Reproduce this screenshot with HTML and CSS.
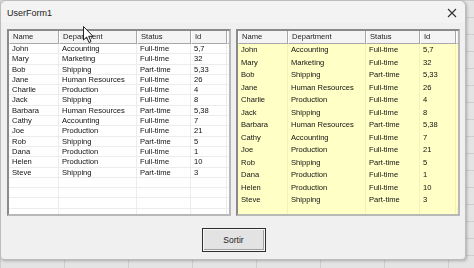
FILE: index.html
```html
<!DOCTYPE html>
<html lang="en">

<head>
	<meta charset="UTF-8">
	<meta name="viewport" content="width=device-width, initial-scale=1.0">
	<title>UserForm1</title>
	<link rel="stylesheet" href="styles.css">
</head>

<body>
	<div class="window">
		<div class="titlebar">
			<span class="title">UserForm1</span>
			<svg class="close" width="10" height="10" viewBox="0 0 10 10">
				<path d="M1 1 L9 9 M9 1 L1 9" stroke="#333" stroke-width="1.1" fill="none" />
			</svg>
		</div>
		<div class="client">
			<div class="lists">
				<div class="listbox plain">
					<div class="list-head"><span>Name</span><span>Department</span><span>Status</span><span>Id</span><span></span></div>
					<div class="list-row"><span>John</span><span>Accounting</span><span>Full-time</span><span>5,7</span><span></span></div>
					<div class="list-row"><span>Mary</span><span>Marketing</span><span>Full-time</span><span>32</span><span></span></div>
					<div class="list-row"><span>Bob</span><span>Shipping</span><span>Part-time</span><span>5,33</span><span></span></div>
					<div class="list-row"><span>Jane</span><span>Human Resources</span><span>Full-time</span><span>26</span><span></span></div>
					<div class="list-row"><span>Charlie</span><span>Production</span><span>Full-time</span><span>4</span><span></span></div>
					<div class="list-row"><span>Jack</span><span>Shipping</span><span>Full-time</span><span>8</span><span></span></div>
					<div class="list-row"><span>Barbara</span><span>Human Resources</span><span>Part-time</span><span>5,38</span><span></span></div>
					<div class="list-row"><span>Cathy</span><span>Accounting</span><span>Full-time</span><span>7</span><span></span></div>
					<div class="list-row"><span>Joe</span><span>Production</span><span>Full-time</span><span>21</span><span></span></div>
					<div class="list-row"><span>Rob</span><span>Shipping</span><span>Part-time</span><span>5</span><span></span></div>
					<div class="list-row"><span>Dana</span><span>Production</span><span>Full-time</span><span>1</span><span></span></div>
					<div class="list-row"><span>Helen</span><span>Production</span><span>Full-time</span><span>10</span><span></span></div>
					<div class="list-row"><span>Steve</span><span>Shipping</span><span>Part-time</span><span>3</span><span></span></div>
					<div class="list-row"><span></span><span></span><span></span><span></span><span></span></div>
					<div class="list-row"><span></span><span></span><span></span><span></span><span></span></div>
					<div class="list-row"><span></span><span></span><span></span><span></span><span></span></div>
					<div class="list-row"><span></span><span></span><span></span><span></span><span></span></div>
					<div class="list-fill"><span></span><span></span><span></span><span></span><span></span></div>
				</div>
				<div class="listbox yellow">
					<div class="list-head"><span>Name</span><span>Department</span><span>Status</span><span>Id</span><span></span></div>
					<div class="list-row"><span>John</span><span>Accounting</span><span>Full-time</span><span>5,7</span><span></span></div>
					<div class="list-row"><span>Mary</span><span>Marketing</span><span>Full-time</span><span>32</span><span></span></div>
					<div class="list-row"><span>Bob</span><span>Shipping</span><span>Part-time</span><span>5,33</span><span></span></div>
					<div class="list-row"><span>Jane</span><span>Human Resources</span><span>Full-time</span><span>26</span><span></span></div>
					<div class="list-row"><span>Charlie</span><span>Production</span><span>Full-time</span><span>4</span><span></span></div>
					<div class="list-row"><span>Jack</span><span>Shipping</span><span>Full-time</span><span>8</span><span></span></div>
					<div class="list-row"><span>Barbara</span><span>Human Resources</span><span>Part-time</span><span>5,38</span><span></span></div>
					<div class="list-row"><span>Cathy</span><span>Accounting</span><span>Full-time</span><span>7</span><span></span></div>
					<div class="list-row"><span>Joe</span><span>Production</span><span>Full-time</span><span>21</span><span></span></div>
					<div class="list-row"><span>Rob</span><span>Shipping</span><span>Part-time</span><span>5</span><span></span></div>
					<div class="list-row"><span>Dana</span><span>Production</span><span>Full-time</span><span>1</span><span></span></div>
					<div class="list-row"><span>Helen</span><span>Production</span><span>Full-time</span><span>10</span><span></span></div>
					<div class="list-row"><span>Steve</span><span>Shipping</span><span>Part-time</span><span>3</span><span></span></div>
					<div class="list-fill"><span></span><span></span><span></span><span></span><span></span></div>
				</div>
			</div>
			<div class="actions">
				<button class="standard-button">Sortir</button>
			</div>
		</div>
	</div>

	<!-- mouse pointer over the form -->
	<svg class="cursor" width="12" height="18" viewBox="0 0 12 18">
		<path d="M0.5 0.5 L0.5 14 L3.6 11 L6 16.5 L8 15.6 L5.7 10.3 L10 10.3 Z" fill="#fff" stroke="#222" stroke-width="1" />
	</svg>
</body>

</html>
```

FILE: styles.css
```css
* {
	margin: 0;
	padding: 0;
	box-sizing: border-box;
}

body {
	width: 474px;
	height: 268px;
	overflow: hidden;
	position: relative;
	background-color: #e4e4e4;
	background-image:
		linear-gradient(#cfcfcf 1px, transparent 1px),
		linear-gradient(90deg, #cfcfcf 1px, transparent 1px);
	background-size: 64px 17px;
	font-family: "Liberation Sans", Arial, sans-serif;
}

.window {
	width: 466px;
	height: 260px;
	background: #f0f0f0;
	border: 1px solid #bcbcbc;
	border-radius: 6px 6px 4px 4px;
	display: flex;
	flex-direction: column;
	box-shadow: 1px 1px 3px rgba(0, 0, 0, 0.25);
}

.titlebar {
	height: 22px;
	display: flex;
	align-items: center;
	justify-content: space-between;
	padding: 2px 6px 0 6px;
	background: #f3f3f3;
	border-radius: 6px 6px 0 0;
}

.title {
	font-size: 9px;
	color: #222;
}

.close {
	margin-right: 2px;
}

.client {
	padding: 6px 5px 0 6px;
}

.lists {
	display: flex;
	gap: 5px;
}

.listbox {
	width: 224px;
	height: 187px;
	border: 2px solid;
	border-color: #8a8a8a #b8b8b8 #b8b8b8 #8a8a8a;
	display: flex;
	flex-direction: column;
	overflow: hidden;
	font-size: 7.6px;
	color: #111;
}

.plain {
	background: white;
}

.yellow {
	background: #ffffc6;
}

.list-head,
.list-row,
.list-fill {
	display: grid;
	grid-template-columns: 50px 78px 54px 36px 1fr;
}

.list-head {
	height: 13px;
	background: #f4f4f4;
	flex-shrink: 0;
}

.list-head span {
	border-right: 1px solid #a8a8a8;
	border-bottom: 1px solid #a8a8a8;
	border-left: 1px solid #ffffff;
	padding-left: 3px;
	line-height: 12px;
	color: #222;
}

.list-row {
	flex-shrink: 0;
}

/* grey text, no colour fringes on the small font */
.list-head span,
.list-row span {
	filter: grayscale(1);
}

.list-row span {
	padding-left: 3px;
	white-space: nowrap;
	overflow: hidden;
}

.plain .list-row {
	height: 10.3px;
}

.plain .list-row span {
	line-height: 9.3px;
	border-right: 1px solid #ececec;
	border-bottom: 1px solid #ececec;
}

.yellow .list-row {
	height: 12.5px;
}

.yellow .list-row span {
	line-height: 12.5px;
	border-right: 1px solid rgba(0, 0, 0, 0.05);
}

.list-fill {
	flex: 1;
}

.plain .list-fill span {
	border-right: 1px solid #ececec;
}

.yellow .list-fill span {
	border-right: 1px solid rgba(0, 0, 0, 0.05);
}

.actions {
	display: flex;
	justify-content: center;
	margin-top: 12px;
}

.standard-button {
	width: 64px;
	height: 24px;
	font-family: "Liberation Sans", Arial, sans-serif;
	font-size: 8.5px;
	color: #222;
	background: #e3e3e3;
	border: 1px solid #2e2e2e;
	box-shadow: inset 0 0 0 1px #f6f6f6, inset -1px -1px 0 1px #a0a0a0;
	cursor: pointer;
}

.cursor {
	position: absolute;
	left: 83px;
	top: 26px;
}
```
